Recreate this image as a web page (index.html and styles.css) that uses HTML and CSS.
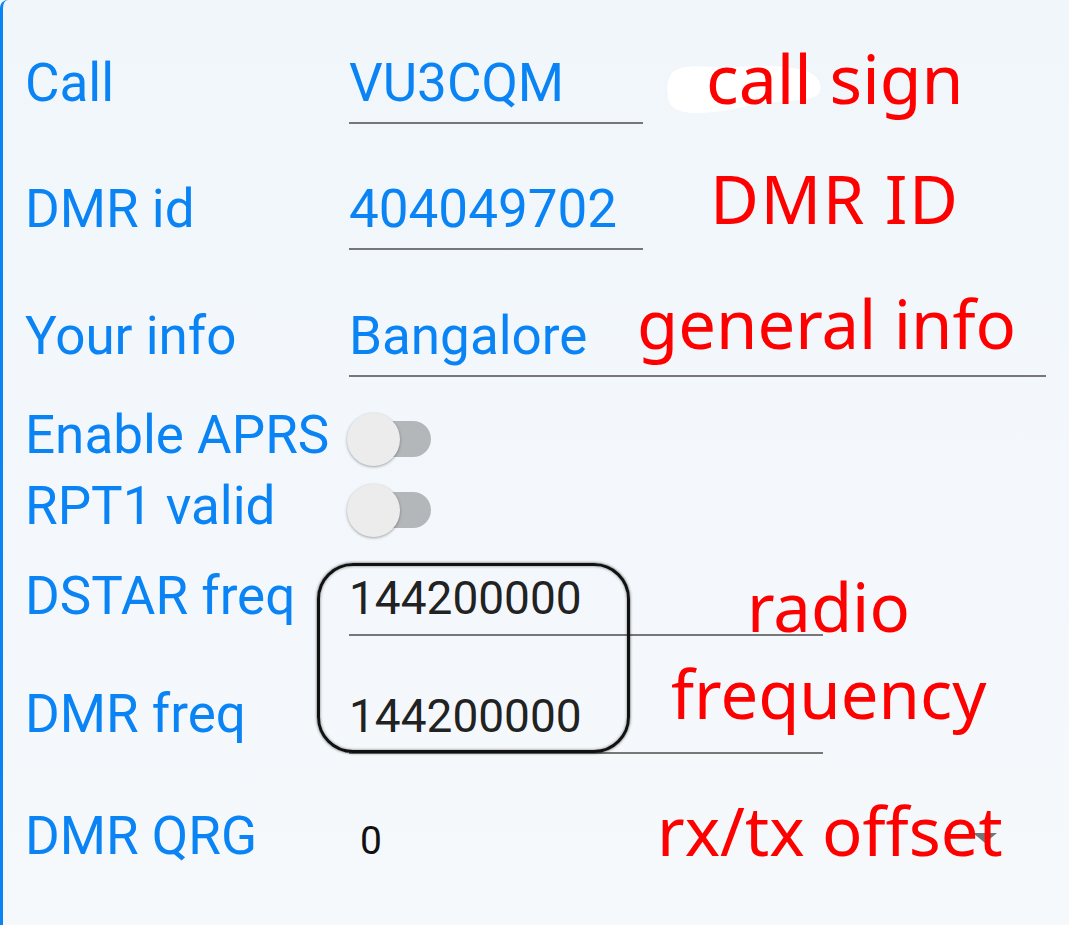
FILE: index.html
```html
<!DOCTYPE html>
<html lang="en">
<head>
    <meta charset="UTF-8">
    <meta name="viewport" content="width=device-width, initial-scale=1.0">
    <title>Settings</title>
    <link rel="stylesheet" href="styles.css">
</head>
<body>

    <div class="panel">
        <div class="row row-call">
            <div class="label">Call</div>
            <div class="field short">VU3CQM</div>
        </div>
        <div class="row row-id">
            <div class="label">DMR id</div>
            <div class="field short">404049702</div>
        </div>
        <div class="row row-info">
            <div class="label">Your info</div>
            <div class="field wide">Bangalore</div>
        </div>
        <div class="row row-aprs switch-row">
            <div class="label">Enable APRS</div>
            <div class="switch"><span class="track"></span><span class="knob"></span></div>
        </div>
        <div class="row row-rpt switch-row">
            <div class="label">RPT1 valid</div>
            <div class="switch"><span class="track"></span><span class="knob"></span></div>
        </div>
        <div class="row row-dstar">
            <div class="label">DSTAR freq</div>
            <div class="field freq">144200000</div>
        </div>
        <div class="row row-dmrfreq">
            <div class="label">DMR freq</div>
            <div class="field freq">144200000</div>
        </div>
        <div class="row row-qrg">
            <div class="label">DMR QRG</div>
            <div class="spinner">
                <span class="spinner-value">0</span>
                <span class="arrow"></span>
            </div>
        </div>

        <!-- annotations drawn on top of the screenshot -->
        <svg class="blob" width="160" height="54" viewBox="0 0 160 54">
            <path d="M10,8 C22,2 42,5 58,6 C82,4 118,2 140,9 C156,14 159,30 148,35 C130,41 110,38 90,42 C70,47 50,51 30,51 C12,51 2,45 2,34 C0,24 2,12 10,8 Z" fill="#ffffff"/>
        </svg>
        <div class="note note-call">call sign</div>
        <div class="note note-id">DMR ID</div>
        <div class="note note-info">general info</div>
        <div class="note note-radio">radio</div>
        <div class="note note-freq">frequency</div>
        <div class="note note-offset">rx/tx offset</div>
        <div class="circle"></div>
    </div>

</body>
</html>
```

FILE: styles.css
```css
body {
    margin: 0;
    background-color: #f2f7fb;
    font-family: Roboto, "Liberation Sans", sans-serif;
    overflow: hidden;
}

.panel {
    position: relative;
    box-sizing: border-box;
    height: 925px;
    padding: 57px 0 0 22px;
    border-left: 3px solid #0a84f5;
    border-top-left-radius: 8px;
    background: linear-gradient(#f1f6fb, #f5f9fc);
}

.row {
    display: flex;
    align-items: baseline;
}

.row-call { height: 126px; }
.row-id { height: 127px; }
.row-info { height: 99px; }
.row-aprs { height: 71px; }
.row-rpt { height: 90px; }
.row-dstar { height: 118px; }
.row-dmrfreq { height: 122px; }

.label {
    width: 324px;
    flex-shrink: 0;
    font-size: 53px;
    line-height: 53px;
    color: #0a84f5;
    white-space: nowrap;
}

.field {
    box-sizing: border-box;
    font-size: 53px;
    line-height: 53px;
    color: #0a84f5;
    padding-bottom: 12px;
    border-bottom: 2px solid #777;
}

.field.short { width: 294px; }
.field.wide { width: 697px; }

.field.freq {
    width: 474px;
    font-size: 46px;
    color: #222;
    padding-bottom: 9px;
}

.switch-row {
    align-items: flex-start;
}

.switch {
    position: relative;
    width: 84px;
    height: 53px;
    margin: 4px 0 0 -2px;
}

.switch .track {
    position: absolute;
    left: 12px;
    top: 8px;
    width: 72px;
    height: 36px;
    border-radius: 18px;
    background-color: #b4b7ba;
}

.switch .knob {
    position: absolute;
    left: 0;
    top: 0;
    width: 53px;
    height: 53px;
    border-radius: 50%;
    background-color: #ececec;
    box-shadow: 0 1px 3px rgba(0, 0, 0, 0.35);
}

.spinner {
    display: flex;
    align-items: flex-start;
    justify-content: space-between;
    width: 648px;
    padding-left: 11px;
    box-sizing: border-box;
}

.spinner-value {
    font-size: 39px;
    line-height: 53px;
    color: #111;
}

.arrow {
    width: 0;
    height: 0;
    margin-top: 18px;
    border-left: 12px solid transparent;
    border-right: 12px solid transparent;
    border-top: 10px solid #757575;
}

.blob {
    position: absolute;
    left: 663px;
    top: 62px;
}

.note {
    position: absolute;
    font-family: "Noto Sans", "Open Sans", sans-serif;
    font-size: 67px;
    line-height: 67px;
    color: #ff0000;
    white-space: nowrap;
}

.note-call { left: 703px; top: 44px; font-size: 68px; line-height: 68px; }
.note-id { left: 707px; top: 165px; letter-spacing: 1.5px; }
.note-info { left: 634px; top: 290px; }
.note-radio { left: 744px; top: 573px; }
.note-freq { left: 668px; top: 660px; }
.note-offset { left: 654px; top: 797px; }

.circle {
    position: absolute;
    left: 314px;
    top: 563px;
    width: 313px;
    height: 190px;
    box-sizing: border-box;
    border: 3px solid #111;
    border-radius: 36px;
    box-shadow: 0 0 3px rgba(0, 0, 0, 0.7), inset 0 0 3px rgba(0, 0, 0, 0.5);
}
```
